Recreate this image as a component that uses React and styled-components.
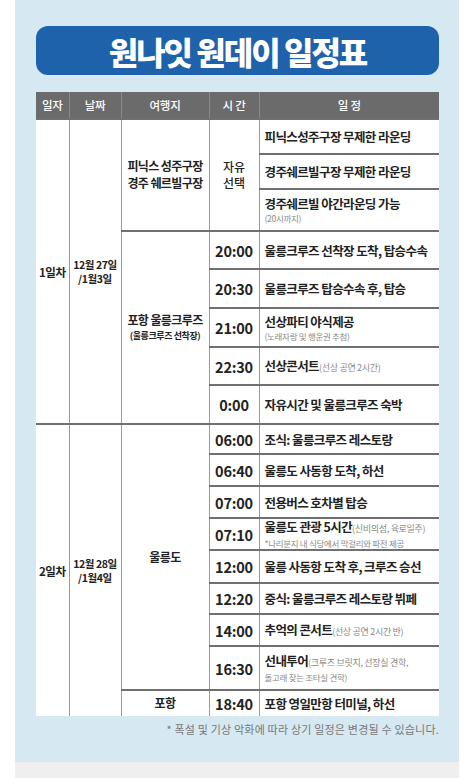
import React from "react";
import styled, { createGlobalStyle } from "styled-components";

const GlobalStyle = createGlobalStyle`
  body {
    margin: 0;
    background: #ffffff;
    font-family: "Noto Sans CJK KR", "Noto Sans", sans-serif;
  }
`;

// 일정 데이터
const dayOne = [
  { time: null, title: "피닉스성주구장 무제한 라운딩", h: 35 },
  { time: null, title: "경주쉐르빌구장 무제한 라운딩", h: 35 },
  { time: null, title: "경주쉐르빌 야간라운딩 가능", sub: "(20시까지)", h: 42 },
  { time: "20:00", title: "울릉크루즈 선착장 도착, 탑승수속", h: 38 },
  { time: "20:30", title: "울릉크루즈 탑승수속 후, 탑승", h: 39 },
  { time: "21:00", title: "선상파티 야식제공", sub: "(노래자랑 및 행운권 추첨)", h: 39 },
  { time: "22:30", title: "선상콘서트", inline: "(선상 공연 2시간)", h: 38 },
  { time: "0:00", title: "자유시간 및 울릉크루즈 숙박", h: 39 },
];

const dayTwo = [
  { time: "06:00", title: "조식: 울릉크루즈 레스토랑", h: 30 },
  { time: "06:40", title: "울릉도 사동항 도착, 하선", h: 32 },
  { time: "07:00", title: "전용버스 호차별 탑승", h: 32 },
  {
    time: "07:10",
    title: "울릉도 관광 5시간",
    inline: "(신비의섬, 육로일주)",
    sub: "*나리분지 내 식당에서 막걸리와 파전 제공",
    h: 32,
  },
  { time: "12:00", title: "울릉 사동항 도착 후, 크루즈 승선", h: 33 },
  { time: "12:20", title: "중식: 울릉크루즈 레스토랑 뷔페", h: 31 },
  { time: "14:00", title: "추억의 콘서트", inline: "(선상 공연 2시간 반)", h: 32 },
  {
    time: "16:30",
    title: "선내투어",
    inline: "(크루즈 브릿지, 선장실 견학,",
    sub: "돌고래 찾는 조타실 견학)",
    h: 44,
  },
  { time: "18:40", title: "포항 영일만항 터미널, 하선", h: 26 },
];

function Plan({ item }) {
  return (
    <>
      <PlanTitle>
        {item.title}
        {item.inline && <Inline>{item.inline}</Inline>}
      </PlanTitle>
      {item.sub && <Sub>{item.sub}</Sub>}
    </>
  );
}

function App() {
  return (
    <>
      <GlobalStyle />
      <Frame>
        <Sheet>
          <Panel>
            <TitleBar>
              <Title>원나잇 원데이 일정표</Title>
            </TitleBar>

            <Schedule>
              <colgroup>
                <col style={{ width: 33 }} />
                <col style={{ width: 52 }} />
                <col style={{ width: 88 }} />
                <col style={{ width: 50 }} />
                <col style={{ width: 180 }} />
              </colgroup>
              <thead>
                <tr>
                  <Head>일자</Head>
                  <Head>날짜</Head>
                  <Head>여행지</Head>
                  <Head>시 간</Head>
                  <Head>일 정</Head>
                </tr>
              </thead>
              <tbody>
                {dayOne.map((item, i) => (
                  <Row key={`a${i}`} $h={item.h}>
                    {i === 0 && (
                      <>
                        <DayCell rowSpan={8}>1일차</DayCell>
                        <DateCell rowSpan={8}>
                          12월 27일
                          <br />
                          /1월3일
                        </DateCell>
                        <PlaceCell rowSpan={3}>
                          피닉스 성주구장
                          <br />
                          경주 쉐르빌구장
                        </PlaceCell>
                        <FreeCell rowSpan={3}>
                          자유
                          <br />
                          선택
                        </FreeCell>
                      </>
                    )}
                    {i === 3 && (
                      <PlaceCell rowSpan={5}>
                        포항 울릉크루즈
                        <PlaceNote>(울릉크루즈 선착장)</PlaceNote>
                      </PlaceCell>
                    )}
                    {item.time && <TimeCell>{item.time}</TimeCell>}
                    <PlanCell>
                      <Plan item={item} />
                    </PlanCell>
                  </Row>
                ))}
                {dayTwo.map((item, i) => (
                  <Row key={`b${i}`} $h={item.h}>
                    {i === 0 && (
                      <>
                        <DayCell rowSpan={9}>2일차</DayCell>
                        <DateCell rowSpan={9}>
                          12월 28일
                          <br />
                          /1월4일
                        </DateCell>
                        <PlaceCell rowSpan={8}>울릉도</PlaceCell>
                      </>
                    )}
                    {i === 8 && <PlaceCell>포항</PlaceCell>}
                    <TimeCell>{item.time}</TimeCell>
                    <PlanCell>
                      <Plan item={item} />
                    </PlanCell>
                  </Row>
                ))}
              </tbody>
            </Schedule>

            <Note>* 폭설 및 기상 악화에 따라 상기 일정은 변경될 수 있습니다.</Note>
          </Panel>
        </Sheet>
      </Frame>
    </>
  );
}

export default App;

// ================== Styled Components ==================
const Frame = styled.div`
  padding: 0 15px;
  background: #ffffff;
`;

const Sheet = styled.div`
  background: #efefef;
  height: 778px;
`;

const Panel = styled.div`
  box-sizing: border-box;
  height: 762px;
  background: #d6e9f2;
  padding: 26px 20px 0 21px;
  display: flex;
  flex-direction: column;
`;

const TitleBar = styled.div`
  height: 49px;
  border-radius: 12px;
  background: #1e62ab;
  display: flex;
  align-items: center;
  justify-content: center;
  margin-bottom: 17px;
`;

const Title = styled.h1`
  margin: 0;
  color: #ffffff;
  font-size: 32px;
  font-weight: 900;
  letter-spacing: -2px;
  line-height: 1;
`;

const Schedule = styled.table`
  width: 403px;
  table-layout: fixed;
  border-collapse: collapse;
  border-style: hidden;
  background: #ffffff;
  color: #222222;
`;

const Head = styled.th`
  height: 26px;
  padding: 0;
  background: #6b6b6b;
  color: #ffffff;
  font-size: 11.5px;
  font-weight: 500;
  letter-spacing: -0.3px;
  border: 1px solid #8a8a8a;
  border-top: none;
`;

const Row = styled.tr`
  height: ${(p) => p.$h}px;
`;

const Cell = styled.td`
  padding: 0;
  vertical-align: middle;
  text-align: center;
  border-left: 1px solid #9a9a9a;
  border-right: 1px solid #9a9a9a;
  border-top: 2px solid #707070;
  border-bottom: 2px solid #707070;
  font-weight: 700;
`;

const DayCell = styled(Cell)`
  font-size: 11.5px;
  letter-spacing: -0.5px;
`;

const DateCell = styled(Cell)`
  font-size: 10.5px;
  line-height: 1.3;
  letter-spacing: -0.4px;
`;

const PlaceCell = styled(Cell)`
  font-size: 12px;
  line-height: 1.4;
  letter-spacing: -0.6px;
`;

const PlaceNote = styled.div`
  font-size: 9px;
  line-height: 1.5;
  letter-spacing: -0.4px;
`;

const FreeCell = styled(Cell)`
  font-size: 12px;
  line-height: 1.35;
  font-weight: 500;
`;

const TimeCell = styled(Cell)`
  font-size: 14.5px;
  letter-spacing: -0.2px;
`;

const PlanCell = styled(Cell)`
  text-align: left;
  padding: 0 3px 0 5px;
`;

const PlanTitle = styled.div`
  font-size: 12.5px;
  font-weight: 700;
  letter-spacing: -0.6px;
  line-height: 15px;
`;

const Inline = styled.span`
  font-size: 9px;
  font-weight: 400;
  color: #888888;
  letter-spacing: -0.3px;
`;

const Sub = styled.div`
  margin-top: 1px;
  font-size: 8.5px;
  font-weight: 400;
  color: #8a8a8a;
  letter-spacing: -0.3px;
  line-height: 12px;
`;

const Note = styled.p`
  margin: 5px 0 0;
  text-align: right;
  font-size: 11px;
  line-height: 16px;
  letter-spacing: 0.2px;
  color: #777777;
`;
